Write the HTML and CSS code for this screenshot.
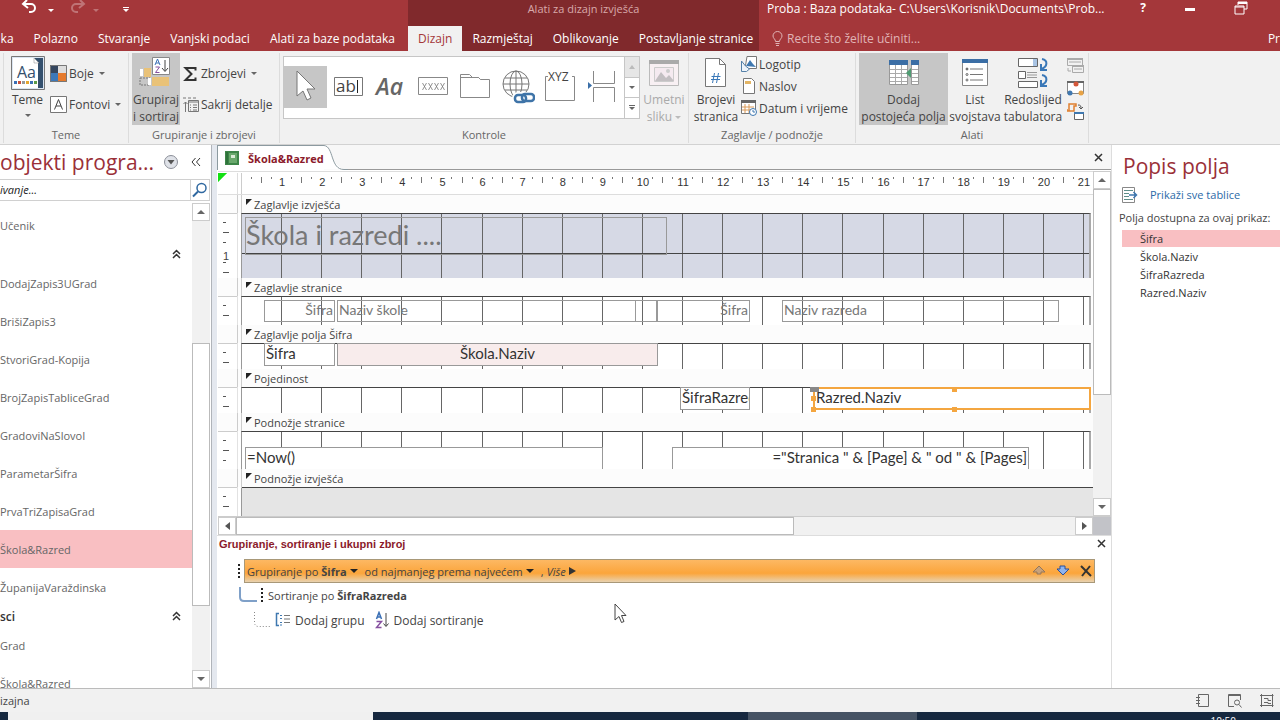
FILE: index.html
```html
<!DOCTYPE html>
<html lang="hr">
<head>
  <meta charset="UTF-8">
  <meta name="viewport" content="width=device-width, initial-scale=1.0">
  <title>Proba : Baza podataka</title>
  <link rel="stylesheet" href="styles.css">
</head>
<body>
  <header class="top">
    <div class="top-main">
      <div class="quick">
        <button aria-label="Poništi"><svg width="18" height="16" viewBox="0 0 18 16"><path d="M6 1L2 5l5 4M2.500 5h7.500a4 4 0 0 1 0 8H8" fill="none" stroke="#fff" stroke-width="2"/></svg></button>
        <button aria-label="Popis poništavanja"><i class="caret light"></i></button>
        <button class="dim" aria-label="Ponovi"><svg width="18" height="16" viewBox="0 0 18 16"><path d="M12 1l4 4-5 4M15.500 5H8a4 4 0 0 0 0 8h2" fill="none" stroke="#fff" stroke-width="2"/></svg></button>
        <button class="dim" aria-label="Popis ponavljanja"><i class="caret light"></i></button>
        <button class="more" aria-label="Prilagodi"><i class="caret light lined"></i></button>
      </div>
      <nav class="tabs tabs-main">
        <button>ka</button>
        <button>Polazno</button>
        <button>Stvaranje</button>
        <button>Vanjski podaci</button>
        <button>Alati za baze podataka</button>
      </nav>
    </div>
    <div class="top-context">
      <div class="context-title">Alati za dizajn izvješća</div>
      <nav class="tabs">
        <button class="active">Dizajn</button>
        <button>Razmještaj</button>
        <button>Oblikovanje</button>
        <button>Postavljanje stranice</button>
      </nav>
    </div>
    <div class="top-right">
      <div class="caption">
        <span class="caption-text">Proba : Baza podataka- C:\Users\Korisnik\Documents\Prob...</span>
        <div class="window-buttons">
          <button aria-label="Pomoć">?</button>
          <button aria-label="Minimiziraj"><svg width="12" height="14" viewBox="0 0 12 14"><path d="M1 8.500h10" stroke="#fff" stroke-width="3"/></svg></button>
          <button aria-label="Vrati"><svg width="14" height="14" viewBox="0 0 14 14" fill="none" stroke="#fff"><path d="M4 4V1h9v7h-3" stroke-width="1"/><path d="M4 2h9" stroke-width="2"/><path d="M1 5h9v8H1zM1 6h9" stroke-width="1"/></svg></button>
        </div>
      </div>
      <div class="tell">
        <svg width="11" height="16" viewBox="0 0 11 16" fill="none" stroke="#e0b4b6"><path d="M3.500 10.500C3.500 8 1 7.500 1 5a4.500 4.500 0 0 1 9 0c0 2.500-2.500 3-2.500 5.500zM3.500 12.500h4M4 14.500h3"/></svg>
        <span>Recite što želite učiniti...</span>
        <a href="#" class="signin">Pr</a>
      </div>
    </div>
  </header>

  <div class="ribbon">
    <section class="group g-themes">
      <div class="group-body">
        <button class="big">
          <span class="ico"><svg width="34" height="34" viewBox="0 0 34 34"><path d="M.5 .5h33v33H.5z" fill="#dce6f2" stroke="#777"/><path d="M2 2h27l3 3v27H2z" fill="#fff"/><path d="M27 2h5v30h-5V7l-4-5z" fill="#34506e"/><path d="M23 2v5h5z" fill="#fff" stroke="#888" stroke-width=".5"/><path d="M3 25h3v3H3z" fill="#3a6fb5"/><path d="M7 25h3v3H7z" fill="#c9513b"/><path d="M11 25h3v3h-3z" fill="#999"/><path d="M15 25h3v3h-3z" fill="#e6a72e"/><path d="M19 25h3v3h-3z" fill="#3a6fb5"/><path d="M23 25h3v3h-3z" fill="#5c9c49"/><text x="6" y="22" class="svg-aa">Aa</text></svg></span>
          <span>Teme</span>
          <i class="caret"></i>
        </button>
        <div class="smalls two">
          <button><svg width="17" height="17" viewBox="0 0 17 17"><path d="M0 0h8v8H0z" fill="#34465e"/><path d="M8 0h9v8H8z" fill="#ddd"/><path d="M0 8h8v9H0z" fill="#3c78b8"/><path d="M8 8h9v9H8z" fill="#e57a2c"/><path d="M.5 .5h16v16H.5z" fill="none" stroke="#777"/></svg>Boje<i class="caret"></i></button>
          <button><svg width="17" height="17" viewBox="0 0 17 17"><path d="M.5 .5h16v16H.5z" fill="#fff" stroke="#777"/><path d="M4.500 13.500l4-10 4 10M6 10h5" fill="none" stroke="#444"/></svg>Fontovi<i class="caret"></i></button>
        </div>
      </div>
      <h2>Teme</h2>
    </section>

    <section class="group g-totals">
      <div class="group-body">
        <button class="big pressed">
          <span class="ico"><svg width="34" height="34" viewBox="0 0 34 34"><path d="M5 12h7v9H5z" fill="#e9c278"/><path d="M1 13h3v7H1z" fill="#fff"/><path d="M1 22h10v7H1z" fill="none" stroke="#777" stroke-dasharray="2 1"/><path d="M13 21h17v9H13z" fill="#e9c278"/><path d="M9 22h3v7H9z" fill="#fff"/><path d="M13.500 1.500h17v17h-17z" fill="#fff" stroke="#888"/><path d="M16 9l2.500-6L21 9M17 7h3" fill="none" stroke="#3a6fb5"/><path d="M16.500 11h4l-4 5.500h4" fill="none" stroke="#8650a0"/><path d="M26 4v11M23 12l3 3.500 3-3.500" fill="none" stroke="#444"/></svg></span>
          <span>Grupiraj<br>i sortiraj</span>
        </button>
        <div class="smalls two">
          <button><svg width="16" height="16" viewBox="0 0 16 16"><path d="M12.500 4.500V2H2.500l6 6-6 6h10v-2.500" fill="none" stroke="#333" stroke-width="2"/></svg>Zbrojevi<i class="caret"></i></button>
          <button><svg width="16" height="16" viewBox="0 0 16 16" fill="none" stroke="#777"><path d="M5.500 3.500h10v11h-10zM5 5h10M7 8h1m2 0h4M7 10.500h1m2 0h4M7 13h1m2 0h4M2.500 15V5M.5 7l2-2 2 2"/><path d="M0 1h14" stroke-dasharray="3 2"/></svg>Sakrij detalje</button>
        </div>
      </div>
      <h2>Grupiranje i zbrojevi</h2>
    </section>

    <section class="group g-controls">
      <div class="group-body">
        <div class="gallery">
          <button class="sel" aria-label="Odabir"><svg width="34" height="34" viewBox="0 0 34 34"><path d="M9 1v25l6-5 4 9 4-2-4-9h8z" fill="#fff" stroke="#777"/></svg></button>
          <button aria-label="Tekstni okvir"><svg width="34" height="34" viewBox="0 0 34 34"><path d="M3.500 7.500h28v18h-28z" fill="#fff" stroke="#777"/><text x="5" y="22" class="svg-ab">ab</text><path d="M26.500 10v13" stroke="#222"/></svg></button>
          <button aria-label="Natpis"><svg width="34" height="34" viewBox="0 0 34 34"><text x="3" y="25" class="svg-label">Aa</text></svg></button>
          <button aria-label="Gumb"><svg width="34" height="34" viewBox="0 0 34 34"><path d="M2.500 7.500h29v17h-29z" fill="#fff" stroke="#888"/><path d="M6.500 13l4 7m0-7l-4 7M12.500 13l4 7m0-7l-4 7M18.500 13l4 7m0-7l-4 7M24.500 13l4 7m0-7l-4 7" stroke="#777" stroke-width=".8"/></svg></button>
          <button aria-label="Kartica"><svg width="34" height="34" viewBox="0 0 34 34"><path d="M2.500 27.500v-23h9l3 3h6l2 2M2.500 7.500h18l2 2h9v18h-29" fill="#fff" stroke="#888"/></svg></button>
          <button aria-label="Hiperveza"><svg width="34" height="34" viewBox="0 0 34 34" fill="none"><g stroke="#777"><circle cx="15" cy="14" r="13" fill="#fff"/><ellipse cx="15" cy="14" rx="6" ry="13"/><path d="M15 1v26M2 14h26M4 8h22M4 20h22"/></g><g stroke="#fff" stroke-width="6"><rect x="14" y="25" width="11" height="6" rx="3"/><rect x="22" y="25" width="11" height="6" rx="3"/></g><g stroke="#3f74a8" stroke-width="2.500"><rect x="14" y="25" width="11" height="7" rx="3"/><rect x="21" y="24" width="12" height="7" rx="3"/></g></svg></button>
          <button aria-label="Grupa mogućnosti"><svg width="34" height="34" viewBox="0 0 34 34"><path d="M5 6.500H2.500v24h29v-24H29" fill="#fff" stroke="#888"/><text x="5" y="11" class="svg-xyz">XYZ</text></svg></button>
          <button aria-label="Prijelom stranice"><svg width="34" height="34" viewBox="0 0 34 34"><path d="M7.500 1v12.500h21V1M7.500 32V17.500h21V32" fill="none" stroke="#888"/><path d="M2 12l4 3.500L2 19z" fill="#3a6fa8"/></svg></button>
          <div class="gallery-scroll">
            <button class="off" aria-label="Gore"><i class="caret up"></i></button>
            <button aria-label="Dolje"><i class="caret"></i></button>
            <button aria-label="Više"><i class="caret lined"></i></button>
          </div>
        </div>
        <button class="big" disabled>
          <span class="ico"><svg width="30" height="30" viewBox="0 0 30 30"><path d="M.5 2.500h29v25H.5z" fill="#f8f0f3" stroke="#bbb"/><path d="M0 2h30v4H0z" fill="#aaa"/><path d="M5.500 9.500h19v14h-19z" fill="#f5eaf0" stroke="#ccc"/><path d="M6 23l6-9 5 6 3-3 5 6z" fill="#c3bfc2"/><circle cx="19" cy="13" r="2" fill="#ccc"/></svg></span>
          <span>Umetni<br>sliku <i class="caret"></i></span>
        </button>
      </div>
      <h2>Kontrole</h2>
    </section>

    <section class="group g-header">
      <div class="group-body">
        <button class="big">
          <span class="ico"><svg width="24" height="32" viewBox="0 0 24 32"><path d="M1.500 1.500h14l6 6v22h-20z" fill="#fff" stroke="#777"/><path d="M15.500 1.500v6h6" fill="none" stroke="#777"/><path d="M10.500 16l-2 10M14.500 16l-2 10M7.500 19.500h9M7 22.500h9" stroke="#3a78b8"/></svg></span>
          <span>Brojevi<br>stranica</span>
        </button>
        <div class="smalls three">
          <button><svg width="16" height="16" viewBox="0 0 16 16"><path d="M6 .5h9.500v12H4z" fill="#fff" stroke="#777"/><path d="M5 10l4-6 3 4 3 3z" fill="#3f78b0"/><path d="M.5 5l4 5 4 3-3 2.500h-5z" fill="#eef4fa" stroke="#5580a8"/></svg>Logotip</button>
          <button><svg width="16" height="16" viewBox="0 0 16 16"><path d="M2.500 .5h8l3 3v12h-11z" fill="#fff" stroke="#777"/><path d="M4 3h6v3H4z" fill="#e3b565"/></svg>Naslov</button>
          <button><svg width="16" height="16" viewBox="0 0 16 16"><path d="M.5 .5h14v13H.5z" fill="#fff" stroke="#777"/><path d="M0 0h15v3H0z" fill="#666"/><path d="M1 7h12M1 10h9M4 4v9M8 4v9" stroke="#d99a58"/><circle cx="12" cy="12" r="3.500" fill="#fff" stroke="#3f78b0"/><path d="M12 10v2h2" fill="none" stroke="#3f78b0"/></svg>Datum i vrijeme</button>
        </div>
      </div>
      <h2>Zaglavlje / podnožje</h2>
    </section>

    <section class="group g-tools">
      <div class="group-body">
        <button class="big pressed wide">
          <span class="ico"><svg width="32" height="30" viewBox="0 0 32 30"><path d="M1.500 2.500h18v24h-18zM23.500 2.500h7v24h-7z" fill="#fff" stroke="#999"/><path d="M1 2h19v5H1zM23 2h8v5h-8z" fill="#3b6ea5"/><path d="M2 11.500h17M2 15.500h17M2 19.500h17M2 23.500h17M7.500 7v19M13.500 7v19M24 11.500h6M24 15.500h6M24 19.500h6M24 23.500h6" stroke="#aaa"/><path d="M23 10v10l-5-5z" fill="#4f9d73"/></svg></span>
          <span>Dodaj<br>postojeća polja</span>
        </button>
        <button class="big">
          <span class="ico"><svg width="28" height="30" viewBox="0 0 28 30"><path d="M1.500 1.500h25v26h-25z" fill="#fff" stroke="#888"/><path d="M1 1h26v4H1z" fill="#3b6ea5"/><path d="M9 11h13M9 16.500h13M9 22h13" stroke="#777"/><g fill="none" stroke="#666"><circle cx="6" cy="11" r="1" fill="#666"/><circle cx="6" cy="16.500" r="1"/><circle cx="6" cy="22" r="1"/></g></svg></span>
          <span>List<br>svojstava</span>
        </button>
        <button class="big">
          <span class="ico"><svg width="32" height="32" viewBox="0 0 32 32"><g fill="#fff" stroke="#666"><path d="M1.500 1.500h19v8h-19zM1.500 14.500h7v7h-7zM1.500 24.500h19v6h-19z"/></g><path d="M16 2h4v7h-4z" fill="#a9c4e4"/><path d="M10 15.500h10M10 18h10M10 20.500h10" stroke="#999"/><g fill="none" stroke="#3a78b8" stroke-width="2"><path d="M25 2c6 1 6 8-1 10M24 7v6h6M25 18c6 1 6 8-1 10M24 23v6h6"/></g></svg></span>
          <span>Redoslijed<br>tabulatora</span>
        </button>
        <div class="stack">
          <button aria-label="Podizvješće"><svg width="17" height="17" viewBox="0 0 17 17" fill="none" stroke="#aaa"><path d="M.5 1.500h15v7H.5zM5.500 8.500h11v7h-11zM2 5h12M7 12h8"/><path d="M0 2h16M5 9h12" stroke-width="2"/><path d="M1 11v3h3"/></svg></button>
          <button aria-label="Pretvori makronaredbe"><svg width="17" height="17" viewBox="0 0 17 17"><path d="M.5 1.500h16v12H.5z" fill="#fff" stroke="#888"/><path d="M0 1h17v2H0z" fill="#666"/><circle cx="9" cy="4" r="2.500" fill="#d4573a"/><circle cx="3" cy="13" r="2.500" fill="#3f78b0"/><circle cx="14" cy="13" r="2.500" fill="#e8a345"/></svg></button>
          <button aria-label="Prikaz koda"><svg width="17" height="17" viewBox="0 0 17 17" fill="none"><path d="M2 8V1h7v2H7v5H0V6" stroke="#e08030" stroke-width="1.500"/><path d="M11 2c3 0 3 1 3 4m-2-2l2 2 2-2" stroke="#555"/><path d="M7.500 9.500h9v7h-9z" fill="#fff" stroke="#666"/><path d="M7 9h10v2H7z" fill="#3f78b0"/></svg></button>
        </div>
      </div>
      <h2>Alati</h2>
    </section>
  </div>

  <main class="work">
    <aside class="nav-pane">
      <div class="nav-head">
        <h1>objekti progra...</h1>
        <button aria-label="Izbornik"><svg width="14" height="14" viewBox="0 0 14 14"><circle cx="7" cy="7" r="6.500" fill="#dfe2e8" stroke="#8b8f98"/><path d="M3.500 5h7L7 9.500z" fill="#555"/></svg></button>
        <button class="collapse" aria-label="Sažmi"><svg width="10" height="10" viewBox="0 0 10 10"><path d="M4.500 1L1 5l3.500 4M9 1L5.500 5 9 9" fill="none" stroke="#333"/></svg></button>
      </div>
      <form class="search">
        <input type="text" placeholder="ivanje..." aria-label="Pretraživanje">
        <button type="button" aria-label="Traži"><svg width="16" height="16" viewBox="0 0 16 16" fill="none" stroke="#2f68a0"><circle cx="9.500" cy="6" r="4.500" stroke-width="1.500"/><path d="M6 9.500l-5 5" stroke-width="2"/></svg></button>
      </form>
      <div class="nav-body">
        <ul class="nav-list">
          <li><a href="#">Učenik</a></li>
          <li class="cat"><span></span><svg width="9" height="10" viewBox="0 0 9 10"><path d="M1 5l3.500-3.500L8 5M1 9l3.500-3.500L8 9" fill="none" stroke="#333" stroke-width="1.500"/></svg></li>
          <li><a href="#">DodajZapis3UGrad</a></li>
          <li><a href="#">BrišiZapis3</a></li>
          <li><a href="#">StvoriGrad-Kopija</a></li>
          <li><a href="#">BrojZapisTabliceGrad</a></li>
          <li><a href="#">GradoviNaSlovoI</a></li>
          <li><a href="#">ParametarŠifra</a></li>
          <li><a href="#">PrvaTriZapisaGrad</a></li>
          <li class="current"><a href="#">Škola&amp;Razred</a></li>
          <li><a href="#">ŽupanijaVaraždinska</a></li>
          <li class="cat"><span>sci</span><svg width="9" height="10" viewBox="0 0 9 10"><path d="M1 5l3.500-3.500L8 5M1 9l3.500-3.500L8 9" fill="none" stroke="#333" stroke-width="1.500"/></svg></li>
          <li><a href="#">Grad</a></li>
          <li><a href="#">Škola&amp;Razred</a></li>
        </ul>
        <div class="vbar nav-bar">
          <button aria-label="Gore"><i class="caret up"></i></button>
          <div class="track"><div class="thumb"></div></div>
          <button aria-label="Dolje"><i class="caret"></i></button>
        </div>
      </div>
    </aside>

    <div class="center">
      <div class="doc-tabs">
        <button class="doc-tab"><svg width="14" height="14" viewBox="0 0 14 14"><path d="M0 0h14v14H0z" fill="#3d8548"/><path d="M4 2h8v10H4z" fill="#69a86c"/><path d="M6 4h4v3H6z" fill="#dcecd8"/><path d="M2 1v12" stroke="#23602f"/></svg>Škola&amp;Razred</button>
        <svg class="doc-curve" width="24" height="25" viewBox="0 0 24 25"><path d="M0 0c9 1 6 24 24 24.500H0z" fill="#fff"/><path d="M0 .5c10 1 6 24 20 24h4" fill="none" stroke="#8c9aa0"/></svg>
        <div class="doc-rest"><button aria-label="Zatvori"><svg width="9" height="9" viewBox="0 0 9 9"><path d="M1 1l7 7M8 1L1 8" stroke="#333" stroke-width="1.500"/></svg></button></div>
      </div>
      <div class="designer">
        <div class="canvas">
          <div class="ruler-row">
            <div class="corner"></div>
            <div class="ruler" id="ruler"></div>
          </div>

          <div class="bar"><span class="vcell"></span><h3>Zaglavlje izvješća</h3></div>
          <div class="band report-head">
            <div class="vruler"></div>
            <div class="paper">
              <div class="gridlines"></div>
              <div class="cm-line"></div>
              <div class="ctl c-title">Škola i razredi ....</div>
            </div>
          </div>

          <div class="bar"><span class="vcell"></span><h3>Zaglavlje stranice</h3></div>
          <div class="band page-head">
            <div class="vruler"></div>
            <div class="paper">
              <div class="gridlines"></div>
              <div class="ctl grey right c-code">Šifra</div>
              <div class="ctl grey c-school">Naziv škole</div>
              <div class="ctl grey c-gap"></div>
              <div class="ctl grey right c-class-code">Šifra</div>
              <div class="ctl grey c-class">Naziv razreda</div>
            </div>
          </div>

          <div class="bar"><span class="vcell"></span><h3>Zaglavlje polja Šifra</h3></div>
          <div class="band">
            <div class="vruler"></div>
            <div class="paper">
              <div class="gridlines"></div>
              <div class="ctl field c-code">Šifra</div>
              <div class="ctl field pink c-school">Škola.Naziv</div>
            </div>
          </div>

          <div class="bar"><span class="vcell"></span><h3>Pojedinost</h3></div>
          <div class="band">
            <div class="vruler"></div>
            <div class="paper">
              <div class="gridlines"></div>
              <div class="ctl field c-detail-code">ŠifraRazreda</div>
              <div class="ctl field selected">Razred.Naziv<i class="h h-move"></i><i class="h h-top"></i><i class="h h-left"></i><i class="h h-bottom-left"></i><i class="h h-bottom"></i></div>
            </div>
          </div>

          <div class="bar"><span class="vcell"></span><h3>Podnožje stranice</h3></div>
          <div class="band page-foot">
            <div class="vruler"></div>
            <div class="paper">
              <div class="gridlines"></div>
              <div class="ctl field c-now">=Now()</div>
              <div class="ctl field right c-pages">="Stranica " &amp; [Page] &amp; " od " &amp; [Pages]</div>
            </div>
          </div>

          <div class="bar"><span class="vcell"></span><h3>Podnožje izvješća</h3></div>
          <div class="band empty"><div class="vruler"></div></div>
        </div>
        <div class="vbar design-bar">
          <button aria-label="Gore"><i class="caret up"></i></button>
          <div class="track"><div class="thumb"></div></div>
          <button aria-label="Dolje"><i class="caret"></i></button>
        </div>
        <div class="hbar">
          <button aria-label="Lijevo"><i class="caret left"></i></button>
          <div class="track"><div class="thumb"></div></div>
          <button aria-label="Desno"><i class="caret next"></i></button>
        </div>
        <div class="bar-corner"></div>
      </div>

      <section class="sorting">
        <div class="sorting-head">
          <h2>Grupiranje, sortiranje i ukupni zbroj</h2>
          <button aria-label="Zatvori"><svg width="9" height="9" viewBox="0 0 9 9"><path d="M1 1l7 7M8 1L1 8" stroke="#333" stroke-width="1.500"/></svg></button>
        </div>
        <div class="level">
          <i class="grip"></i>
          <div class="level-bar">
            <button>Grupiranje po <b>Šifra</b><i class="caret"></i></button>
            <button>od najmanjeg prema najvećem<i class="caret"></i></button>
            <button>, <em>Više</em><i class="caret next"></i></button>
            <div class="level-tools">
              <button aria-label="Pomakni gore"><svg width="14" height="12" viewBox="0 0 14 12"><path d="M7 1l6 6H9v2H5V7H1z" fill="#c9a27a" stroke="#94765a"/></svg></button>
              <button aria-label="Pomakni dolje"><svg width="14" height="12" viewBox="0 0 14 12"><path d="M4 1h5v3h4l-6 6-6-6h3z" fill="#8fb4ee" stroke="#2b4f9a"/></svg></button>
              <button aria-label="Izbriši"><svg width="12" height="12" viewBox="0 0 12 12"><path d="M1 1l10 10M10 1L2 11" stroke="#333" stroke-width="2"/></svg></button>
            </div>
          </div>
        </div>
        <div class="level second">
          <svg width="18" height="16" viewBox="0 0 18 16"><path d="M1 0v10q0 4 4 4h13" fill="none" stroke="#7fa0c8" stroke-width="2"/></svg>
          <i class="grip"></i>
          <span>Sortiranje po <b>ŠifraRazreda</b></span>
        </div>
        <div class="level third">
          <svg width="17" height="16" viewBox="0 0 17 16"><path d="M.5 0v10q0 4.500 4 4.500H17" fill="none" stroke="#888" stroke-dasharray="1 2"/></svg>
          <button><svg width="16" height="16" viewBox="0 0 16 16" fill="none"><path d="M4 1.500H1.500v12H4" stroke="#3f78b0" stroke-width="1.500"/><path d="M7 3.500H5M7 6.500H5M7 10.500H5M7 13H5" stroke="#3f78b0"/><path d="M9 3.500h6M9 7h6M9 10.500h6" stroke="#777"/></svg>Dodaj grupu</button>
          <button><svg width="15" height="18" viewBox="0 0 15 18" fill="none"><path d="M1.500 8L4 1.500 6.500 8M2.500 6h3" stroke="#3a6fb5" stroke-width="1.500"/><path d="M1.500 10.500h5l-5 6h5" stroke="#8650a0" stroke-width="1.500"/><path d="M11 2v13M8.500 12.500l2.500 3 2.500-3" stroke="#444"/></svg>Dodaj sortiranje</button>
        </div>
      </section>
    </div>

    <aside class="fields">
      <h1>Popis polja</h1>
      <a href="#" class="all-tables"><svg width="16" height="17" viewBox="0 0 16 17" fill="none"><path d="M.5 1.500h12v15H.5z" fill="#fff" stroke="#888"/><path d="M2 4.500h9M2 7.500h5M2 10.500h5M2 13.500h9" stroke="#5f8f8a"/><path d="M7 9h7M11.500 6l3 3-3 3" stroke="#3f78b0" stroke-width="1.500"/></svg>Prikaži sve tablice</a>
      <p>Polja dostupna za ovaj prikaz:</p>
      <ul>
        <li class="current">Šifra</li>
        <li>Škola.Naziv</li>
        <li>ŠifraRazreda</li>
        <li>Razred.Naziv</li>
      </ul>
    </aside>
  </main>

  <footer class="status">
    <span>izajna</span>
    <div class="views">
      <button aria-label="Prikaz izvješća"><svg width="14" height="14" viewBox="0 0 14 14" fill="none" stroke="#666"><path d="M2.500 .5h10v12h-10zM0 3.500h4M0 6.500h4M0 9.500h4"/></svg></button>
      <button aria-label="Pretpregled ispisa"><svg width="14" height="14" viewBox="0 0 14 14" fill="none" stroke="#666"><path d="M6 12.500H.5V.5h12V6M0 1.500h13"/><circle cx="9" cy="8.500" r="2.500"/><path d="M11 10.500l2.500 3"/></svg></button>
      <button aria-label="Prikaz rasporeda"><svg width="14" height="14" viewBox="0 0 14 14" fill="none" stroke="#666"><path d="M1.500 0v13M12.500 0v13M0 1.500h13.500M0 11.500h13.500M4 4.500h4v2h3M4 8.500h4v1h3"/></svg></button>
    </div>
  </footer>
  <div class="taskbar">
    <div class="task light-task"></div>
    <div class="task active-task"></div>
    <time>10:50</time>
  </div>

  <svg class="pointer" width="14" height="21" viewBox="0 0 14 21"><path d="M1 1v16l4-3.500 2.500 6 2.500-1-2.500-6H12z" fill="#fff" stroke="#444"/></svg>

  <script>
    var ruler = document.getElementById('ruler');
    for (var i = 1; i <= 21; i++) {
      ruler.insertAdjacentHTML('beforeend', '<div class="cm"><i></i><i class="half"></i><i></i><b>' + i + '</b></div>');
    }

    document.querySelectorAll('.gridlines').forEach(function (grid) {
      grid.innerHTML = '<i></i>'.repeat(21);
    });

    // vertical ruler: four ticks to the centimetre, the fourth is the number
    document.querySelectorAll('.vruler').forEach(function (v) {
      var ticks = '<i></i><i class="half"></i><i></i>';
      if (v.parentNode.classList.contains('report-head')) {
        ticks += '<b>1</b><i></i><i class="half"></i>';
      }
      v.innerHTML = ticks;
    });
  </script>
</body>
</html>
```
FILE: styles.css
```css
* {
  box-sizing: border-box;
}
body {
  margin: 0;
  height: 100vh;
  display: flex;
  flex-direction: column;
  overflow: hidden;
  font-family: "Open Sans", "Noto Sans", sans-serif;
  font-size: 12px;
  color: #444;
  background: #fff;
}
button {
  font: inherit;
  color: inherit;
  background: none;
  border: none;
  padding: 0;
  white-space: nowrap;
}
h1, h2, h3, p, ul {
  margin: 0;
  padding: 0;
  font-weight: normal;
  white-space: nowrap;
}
ul {
  list-style: none;
}
a {
  color: inherit;
  text-decoration: none;
}
svg {
  flex: none;
  display: block;
}

.caret {
  display: inline-block;
  flex: none;
  border: 3px solid transparent;
  border-top: 3px solid #666;
  border-bottom: none;
}
.caret.light {
  border-top-color: #fff;
}
.caret.up {
  border-top: none;
  border-bottom: 4px solid #666;
}
.caret.left {
  border: 4px solid transparent;
  border-left: none;
  border-right: 5px solid #555;
}
.caret.next {
  border: 4px solid transparent;
  border-right: none;
  border-left: 5px solid #555;
}
.caret.lined {
  position: relative;
}
.caret.lined::before {
  content: "";
  position: absolute;
  left: -3px;
  top: -5px;
  width: 6px;
  height: 1px;
  background: #666;
}
.caret.light.lined::before {
  background: #fff;
}

/* title bar and tabs */
.top {
  display: grid;
  grid-template-columns: 408px 351px 1fr;
  flex: none;
  color: #fff;
  background: #a4373a;
}
.top > div {
  display: flex;
  flex-direction: column;
  min-width: 0;
}
.quick {
  display: flex;
  align-items: center;
  height: 26px;
  padding: 0 0 12px 21px;
}
.quick button:nth-child(2) {
  margin: 0 14px 0 9px;
}
.quick button:nth-child(4) {
  margin-left: 7px;
}
.quick .dim {
  opacity: .3;
}
.quick .more {
  margin-left: 24px;
}
.tabs {
  display: flex;
  height: 25px;
}
.tabs button {
  padding: 0 10px;
}
.tabs-main {
  justify-content: flex-end;
  padding-right: 3px;
}
.tabs-main button:first-child {
  padding-left: 0;
}
.tabs .active {
  background: #f1f1f1;
  color: #a4373a;
}
.top-context {
  background: #80292c;
}
.context-title {
  height: 26px;
  padding-top: 1px;
  text-align: center;
  font-size: 11px;
  line-height: 16px;
  color: #d8a9ab;
}
.caption {
  display: flex;
  height: 26px;
  padding: 1px 32px 0 8px;
  line-height: 16px;
}
.window-buttons {
  display: flex;
  gap: 38px;
  margin-left: auto;
  height: 14px;
  font-weight: bold;
  align-items: center;
}
.tell {
  display: flex;
  align-items: center;
  gap: 4px;
  height: 25px;
  padding-left: 13px;
  color: #e0b4b6;
}
.signin {
  margin-left: auto;
  color: #fff;
}

/* ribbon */
.ribbon {
  display: flex;
  flex: none;
  background: #f1f1f1;
  border-bottom: 1px solid #d2d2d2;
  padding: 2px 0 1px 3px;
}
.group {
  border-right: 1px solid #dcdcdc;
  flex: none;
}
.group:first-child {
  border-left: 1px solid #dcdcdc;
}
.group h2 {
  font-size: 11px;
  line-height: 16px;
  text-align: center;
  color: #666;
}
.group-body {
  display: flex;
  height: 74px;
  padding: 0 3px;
}
.g-themes {
  width: 126px;
}
.g-totals {
  width: 151px;
}
.g-controls {
  width: 409px;
}
.g-header {
  width: 167px;
}
.g-tools {
  width: 233px;
}
.big {
  display: flex;
  flex-direction: column;
  align-items: center;
  width: 48px;
  height: 72px;
  padding-top: 2px;
  line-height: 17px;
}
.big .ico {
  display: flex;
  align-items: center;
  height: 36px;
}
.big > .caret {
  margin-top: 6px;
}
.big span .caret {
  margin-bottom: 2px;
}
.big:disabled {
  color: #aaa;
  width: 42px;
  margin-left: 3px;
}
.big:disabled .caret {
  border-top-color: #bbb;
}
.pressed {
  background: #c6c6c6;
}
.smalls {
  display: flex;
  flex-direction: column;
  padding-left: 3px;
}
.smalls button {
  display: flex;
  align-items: center;
  gap: 2px;
}
.smalls .caret {
  margin-left: 3px;
}
.two {
  padding-top: 5px;
}
.g-themes .two {
  padding-left: 0;
  margin-left: -5px;
}
.two button {
  height: 31px;
}
.three {
  padding-left: 1px;
}
.three button {
  height: 22px;
}
.g-themes .big {
  width: 47px;
  margin-left: -3px;
  margin-right: 4px;
}
.gallery {
  display: flex;
  height: 63px;
  margin-top: 3px;
  width: 357px;
  background: #fff;
  border: 1px solid #c6c6c6;
}
.gallery > button {
  flex: 1;
  display: flex;
  align-items: center;
  justify-content: center;
  height: 42px;
  margin-top: 9px;
}
.gallery .sel {
  background: #c6c6c6;
}
.gallery-scroll {
  display: flex;
  flex-direction: column;
  width: 15px;
  border-left: 1px solid #c6c6c6;
}
.gallery-scroll button {
  flex: 1;
  display: flex;
  align-items: center;
  justify-content: center;
}
.gallery-scroll button + button {
  border-top: 1px solid #c6c6c6;
}
.gallery-scroll .off {
  background: #e6e6e6;
}
.gallery-scroll .off .caret {
  border-bottom-color: #bbb;
}
.g-tools .wide {
  width: 89px;
}
.g-tools .big:nth-child(2) {
  width: 54px;
}
.g-tools .big:nth-child(3) {
  width: 62px;
}
.stack {
  display: flex;
  flex-direction: column;
  gap: 6px;
  padding: 4px 0 0 3px;
}
.svg-aa {
  font-size: 16px;
  fill: #34506e;
}
.svg-ab {
  font-size: 17px;
  fill: #444;
}
.svg-label {
  font: italic 600 23px "Open Sans", sans-serif;
  fill: #666;
}
.svg-xyz {
  font-size: 12px;
  fill: #444;
}

/* work area */
.work {
  display: flex;
  flex: 1;
  min-height: 0;
}
.nav-pane {
  display: flex;
  flex-direction: column;
  width: 212px;
  border-right: 1px solid #b0b4ba;
}
.nav-head {
  display: flex;
  align-items: center;
  height: 34px;
}
.nav-head h1 {
  width: 164px;
  font-size: 21px;
  color: #9a3038;
}
.collapse {
  margin-left: 13px;
}
.search {
  display: flex;
  height: 22px;
  margin-right: 1px;
  border: 1px solid #d0d0d0;
  border-left: none;
}
.search input {
  flex: 1;
  min-width: 0;
  border: none;
  border-right: 1px solid #d0d0d0;
  padding: 0 0 2px;
  font: italic 11px "Open Sans", sans-serif;
}
.search input::placeholder {
  color: #222;
}
.search button {
  padding: 0 1px;
}
.nav-body {
  display: flex;
  flex: 1;
  min-height: 0;
  padding-top: 2px;
}
.nav-list {
  flex: 1;
  overflow: hidden;
  padding-top: 3px;
  font-size: 11px;
  color: #666;
}
.nav-list li {
  display: flex;
  align-items: center;
  height: 38px;
}
.nav-list .cat {
  height: 20px;
  justify-content: space-between;
  padding-right: 11px;
  font-size: 12px;
  font-weight: 600;
  color: #333;
}
.nav-list .current, .fields .current {
  background: #f9bfc2;
}

.vbar, .hbar {
  display: flex;
  background: #f1f1f1;
}
.vbar {
  flex-direction: column;
  width: 18px;
}
.vbar button, .hbar button {
  display: flex;
  align-items: center;
  justify-content: center;
  width: 18px;
  height: 18px;
  border: 1px solid #ccc;
  background: #fff;
  flex: none;
}
.track {
  flex: 1;
}
.thumb {
  background: #fff;
  border: 1px solid #bbb;
}
.vbar .caret {
  border-left-width: 4px;
  border-right-width: 4px;
  border-top-width: 4px;
}
.vbar .caret.up {
  border-top: none;
}
.nav-bar {
  margin-right: 1px;
}
.nav-bar .thumb {
  margin-top: 122px;
  height: 263px;
}

.center {
  display: flex;
  flex-direction: column;
  flex: 1;
  min-width: 0;
  border-left: 5px solid #e4e8ef;
  border-right: 1px solid #ddd;
}
.doc-tabs {
  display: flex;
  flex: none;
  height: 25px;
  background: #fff;
}
.doc-tab {
  display: flex;
  align-items: center;
  gap: 9px;
  padding-left: 7px;
  width: 107px;
  font-size: 11px;
  font-weight: bold;
  color: #8b1a2b;
  border-top: 1px solid #8c9aa0;
  border-left: 1px solid #8c9aa0;
}
.doc-rest {
  flex: 1;
  display: flex;
  align-items: center;
  justify-content: flex-end;
  padding-right: 8px;
  background: #f7f7f7;
  border-bottom: 1px solid #999;
}
.doc-curve {
  background: #f7f7f7;
}

.designer {
  display: grid;
  grid-template-columns: 1fr 18px;
  flex: none;
  padding: 1px 0 0 1px;
}
.canvas {
  overflow: hidden;
  border-bottom: 1px solid #ccc;
}
.ruler-row, .bar, .band {
  display: grid;
  grid-template-columns: 23px 1fr;
}
.ruler-row {
  height: 24px;
  padding-top: 1px;
  border-bottom: 1px solid #ddd;
  border-top: 1px solid #ddd;
}
.corner {
  width: 20px;
  border-right: 1px solid #ddd;
  background: linear-gradient(135deg, #12e012 6px, #fff 7px);
}
.ruler {
  display: grid;
  grid-template-columns: repeat(21, 1fr);
  width: 843px;
  border-left: 1px solid #ccc;
}
/* each cell ends on its own centimetre, the number hangs over that edge */
.cm {
  display: grid;
  grid-template-columns: repeat(4, 1fr);
  padding-top: 4px;
}
.cm i {
  height: 2px;
  border-right: 1px solid #777;
}
.cm .half {
  height: 6px;
}
.cm b {
  justify-self: end;
  width: 20px;
  margin-right: -10px;
  text-align: center;
  font: 11px/11px "Liberation Sans", sans-serif;
  color: #333;
}
.bar {
  height: 18px;
  background: #fcfcfc;
}
.vcell {
  width: 20px;
  border-right: 1px solid #ccc;
  border-bottom: 1px solid #ccc;
}
.bar h3 {
  position: relative;
  padding-left: 12px;
  font-size: 11px;
  line-height: 19px;
  color: #444;
  border-left: 1px solid #ccc;
}
.bar h3::before {
  content: "";
  position: absolute;
  left: 4px;
  top: 4px;
  border: 3px solid transparent;
  border-top-color: #222;
  border-left-color: #222;
}
.band {
  height: 26px;
  overflow: hidden;
}
.report-head {
  height: 65px;
}
.page-head {
  height: 29px;
}
.page-foot {
  height: 38px;
}
.band.empty {
  height: 29px;
  background: linear-gradient(to right, #fff 23px, #e5e5e5 23px);
}
.empty .vruler {
  height: 29px;
}
.empty::after {
  content: "";
  border-top: 1px solid #444;
  border-left: 1px solid #999;
}
.vruler {
  display: grid;
  grid-auto-rows: 10px;
  align-items: end;
  padding-left: 5px;
  width: 20px;
  border-right: 1px solid #e2e2e2;
  overflow: hidden;
}
.vruler i {
  width: 3px;
  border-bottom: 1px solid #555;
}
.vruler .half {
  width: 6px;
}
.vruler b {
  font: 11px/8px "Liberation Sans", sans-serif;
  margin-bottom: -7px;
}
.paper {
  position: relative;
  width: 850px;
  border-top: 1px solid #444;
  border-left: 1px solid #999;
  border-right: 2px solid #aaa;
}
.report-head .paper {
  background: #d6d9e5;
}
.gridlines {
  display: grid;
  grid-template-columns: repeat(21, 1fr);
  width: 842px;
  height: 100%;
}
.gridlines i {
  border-right: 1px solid #666;
}
.cm-line {
  position: absolute;
  left: 0;
  right: 0;
  top: 39px;
  border-top: 1px solid #444;
}

/* report controls */
.ctl {
  position: absolute;
  top: -1px;
  height: 23px;
  padding: 0 1px;
  border: 1px solid #999;
  font-family: Lato, sans-serif;
  font-size: 14px;
  line-height: 18px;
  color: #333;
  white-space: nowrap;
  overflow: hidden;
}
.field {
  background: #fff;
  font-size: 15px;
}
.grey {
  top: 3px;
  height: 22px;
  color: #777;
}
.right {
  text-align: right;
}
.pink {
  background: #f8ecec;
  text-align: center;
}
.c-title {
  left: 3px;
  top: 3px;
  width: 422px;
  height: 38px;
  padding: 0;
  font-size: 27px;
  line-height: 34px;
  color: #777;
}
.c-code {
  left: 22px;
  width: 71px;
}
.c-school {
  left: 95px;
  width: 321px;
}
.c-gap {
  left: 393px;
  width: 23px;
}
.c-class-code {
  left: 414px;
  width: 94px;
}
.c-class {
  left: 540px;
  width: 277px;
}
.c-detail-code {
  left: 438px;
  width: 70px;
}
.selected {
  left: 571px;
  width: 278px;
  border: 2px solid #f4a640;
  line-height: 17px;
  overflow: visible;
}
.c-now {
  left: 3px;
  top: 15px;
  width: 358px;
  height: 30px;
}
.c-pages {
  left: 430px;
  top: 15px;
  width: 357px;
  height: 30px;
}
.h {
  position: absolute;
  width: 5px;
  height: 5px;
  background: #f4a640;
}
.h-move {
  left: -5px;
  top: -2px;
  width: 9px;
  background: #888;
}
.h-top {
  left: 50%;
  top: -2px;
}
.h-left {
  left: -4px;
  top: 7px;
}
.h-bottom-left {
  left: -4px;
  bottom: -4px;
}
.h-bottom {
  left: 50%;
  bottom: -4px;
}
.design-bar {
  border-bottom: 1px solid #ccc;
}
.design-bar .thumb {
  height: 206px;
}
.hbar .thumb {
  width: 558px;
  height: 18px;
}
.bar-corner {
  background: #c2c3c8;
}

/* group, sort and total */
.sorting {
  flex: 1;
  border-top: 1px solid #ddd;
  font-size: 11px;
}
.sorting-head {
  display: flex;
  align-items: center;
  justify-content: space-between;
  height: 15px;
  padding: 0 5px 0 2px;
}
.sorting h2 {
  font: bold 11px "Liberation Sans", sans-serif;
  color: #8b1a2b;
}
.grip {
  width: 2px;
  height: 15px;
  background: repeating-linear-gradient(#222 0 2px, transparent 2px 4px);
}
.level {
  display: flex;
  align-items: center;
  gap: 4px;
  padding-left: 21px;
  padding-right: 16px;
  margin-top: 8px;
}
.level-bar {
  flex: 1;
  display: flex;
  align-items: center;
  gap: 7px;
  height: 24px;
  padding: 0 2px;
  border: 1px solid #a89878;
  background: linear-gradient(#fdb863, #fba53b 60%, #e8d2b0);
}
.level-bar button {
  display: flex;
  align-items: center;
  gap: 3px;
}
.level-bar .caret {
  border-left-width: 4px;
  border-right-width: 4px;
  border-top-width: 4px;
  border-top-color: #222;
}
.level-bar .caret.next {
  border-right-width: 0;
  border-left: 7px solid #333;
  border-top-color: transparent;
}
.level-tools {
  display: flex;
  align-items: center;
  gap: 10px;
  margin-left: auto;
}
.second {
  margin-top: 1px;
  padding-left: 22px;
  height: 22px;
}
.second span {
  padding-left: 1px;
}
.third {
  margin-top: 0;
  padding-left: 37px;
  height: 28px;
  font-size: 12px;
  gap: 4px;
}
.third button {
  display: flex;
  align-items: center;
  gap: 4px;
  margin-right: 6px;
}

/* field list */
.fields {
  width: 168px;
  padding: 5px 0 0 7px;
  font-size: 11px;
}
.fields h1 {
  padding-left: 4px;
  font-size: 21px;
  line-height: 33px;
  color: #9a3038;
}
.all-tables {
  display: flex;
  align-items: center;
  gap: 12px;
  height: 23px;
  padding-left: 3px;
  color: #2c6aa8;
}
.fields p {
  line-height: 23px;
}
.fields ul {
  padding: 1px 0 0 3px;
  color: #333;
}
.fields li {
  line-height: 17px;
  margin-bottom: 1px;
  padding-left: 18px;
}

.status {
  display: flex;
  align-items: center;
  justify-content: space-between;
  flex: none;
  height: 24px;
  padding-right: 6px;
  font-size: 11px;
  background: #f1f1f1;
  border-top: 1px solid #bbb;
}
.views {
  display: flex;
  gap: 18px;
}
.taskbar {
  display: flex;
  justify-content: space-between;
  flex: none;
  height: 8px;
  padding: 0 44px 0 8px;
  background: #16283f;
  overflow: hidden;
}
.light-task {
  width: 365px;
  background: #f0f0f0;
}
.active-task {
  width: 169px;
  margin-left: 82px;
  background: #465364;
}
.taskbar time {
  padding-top: 2px;
  font-size: 10px;
  line-height: 14px;
  color: #fff;
}
.pointer {
  position: absolute;
  left: 614px;
  top: 603px;
}
```
